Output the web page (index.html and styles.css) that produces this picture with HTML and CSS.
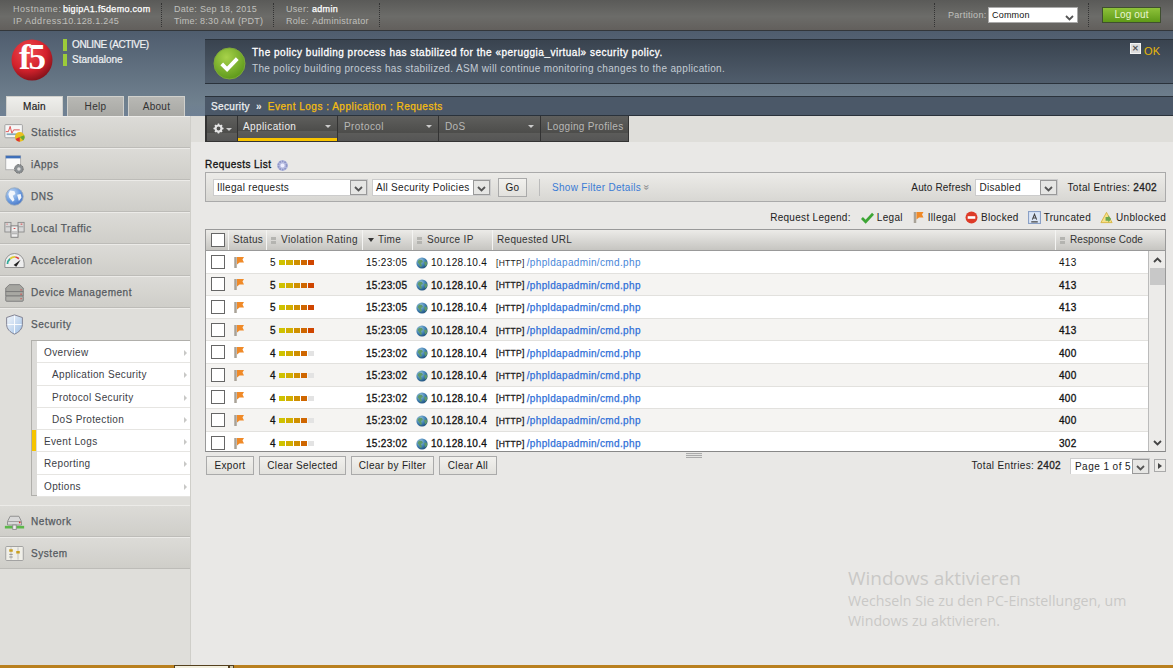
FILE: index.html
```html
<!DOCTYPE html>
<html lang="en">
<head>
<meta charset="utf-8">
<title>BIG-IP Requests</title>
<link rel="stylesheet" href="styles.css">
</head>
<body>
<svg class="defs" width="0" height="0" aria-hidden="true">
  <defs>
    <radialGradient id="gGlobe" cx="35%" cy="30%" r="75%"><stop offset="0" stop-color="#9fc8e8"/><stop offset=".6" stop-color="#3f7fb0"/><stop offset="1" stop-color="#1f4f78"/></radialGradient>
    <radialGradient id="gGlobeBig" cx="35%" cy="30%" r="75%"><stop offset="0" stop-color="#c6dcf5"/><stop offset=".6" stop-color="#6f9ee0"/><stop offset="1" stop-color="#4a78c8"/></radialGradient>
    <radialGradient id="gRed" cx="40%" cy="30%" r="75%"><stop offset="0" stop-color="#f04a50"/><stop offset=".6" stop-color="#d3222c"/><stop offset="1" stop-color="#7d1018"/></radialGradient>
    <radialGradient id="gGreen" cx="40%" cy="30%" r="70%"><stop offset="0" stop-color="#a8d24a"/><stop offset="1" stop-color="#5f9a1c"/></radialGradient>
    <linearGradient id="gShield" x1="0" y1="0" x2="1" y2="1"><stop offset="0" stop-color="#f4f7fb"/><stop offset="1" stop-color="#9fc0e6"/></linearGradient>
    <symbol id="flag" viewBox="0 0 12 13"><path d="M2.500 1v11" stroke="#a8a297" stroke-width="2.500"/><path d="M4 1h7l-1.500 2.500L11 6.500H6.500L4 8.500z" fill="#f08a28"/></symbol>
    <symbol id="globe" viewBox="0 0 12 12"><circle cx="6" cy="6" r="5.600" fill="url(#gGlobe)"/><path d="M3 2.500l3 .5 1 2-2 1 1 3-1.500 1L3 7 1.500 5zM8 5l2.500-.5.800 2.500-2 2.500z" fill="#5f9a6a"/></symbol>
    <symbol id="chev" viewBox="0 0 9 6"><path d="M1 1l3.500 3.500L8 1" fill="none" stroke="#555" stroke-width="1.800"/></symbol>
  </defs>
</svg>
<div class="page">
  <header class="topbar">
    <div class="info info-host">
      <div class="line"><span class="lab lab-host">Hostname:</span><b>bigipA1.f5demo.com</b></div>
      <div class="line"><span class="lab lab-host">IP Address:</span><span class="lab">10.128.1.245</span></div>
    </div>
    <div class="info info-date">
      <div class="line"><span class="lab lab-short">Date:</span><span class="lab">Sep 18, 2015</span></div>
      <div class="line"><span class="lab lab-short">Time:</span><span class="lab">8:30 AM (PDT)</span></div>
    </div>
    <div class="info info-user">
      <div class="line"><span class="lab lab-short">User:</span><b>admin</b></div>
      <div class="line"><span class="lab lab-short">Role:</span><span class="lab">Administrator</span></div>
    </div>
    <div class="info-fill"></div>
    <div class="info info-part">
      <span class="lab lab-part">Partition:</span>
      <span class="part-select">Common<svg class="part-chev"><use href="#chev"/></svg></span>
    </div>
    <div class="info info-logout"><span class="logout">Log out</span></div>
  </header>

  <section class="header">
    <div class="head-left">
      <div class="brand">
        <svg class="logo" viewBox="0 0 44 44">
          <circle cx="22" cy="22" r="20.500" fill="url(#gRed)"/>
          <text x="21.500" y="31" class="logo-text">f5</text>
        </svg>
        <div class="status">
          <div class="status-line status-online">ONLINE (ACTIVE)</div>
          <div class="status-line">Standalone</div>
        </div>
      </div>
      <div class="tabs">
        <span class="tab tab-on">Main</span>
        <span class="tab">Help</span>
        <span class="tab">About</span>
      </div>
    </div>
    <div class="head-right">
      <div class="banner">
        <svg class="banner-icon" viewBox="0 0 34 34">
          <circle cx="17" cy="17" r="16" fill="url(#gGreen)" stroke="#7fa83a"/>
          <path d="M9 17.500l5.500 5.500L25 12" fill="none" stroke="#fff" stroke-width="4"/>
        </svg>
        <div class="banner-text">
          <div class="banner-title">The policy building process has stabilized for the «peruggia_virtual» security policy.</div>
          <div class="banner-sub">The policy building process has stabilized. ASM will continue monitoring changes to the application.</div>
        </div>
        <div class="banner-ok"><span class="xbox">✕</span><span class="ok">OK</span></div>
      </div>
      <div class="crumb"><b>Security</b><span class="crumb-sep">»</span><b class="crumb-path">Event Logs : Application : Requests</b></div>
    </div>
  </section>

  <div class="main">
    <nav class="sidebar">
      <div class="nav-item">
        <svg class="nav-icon" viewBox="0 0 24 24"><rect x="1" y="3" width="20" height="15" rx="1" fill="#f6f6f6" stroke="#999"/><path d="M2 11h3l2-6 2 8 2-4h7" fill="none" stroke="#d44" stroke-width="1"/><path d="M3 14h12" stroke="#8ab" stroke-width="2"/><circle cx="18" cy="17" r="5.500" fill="#e8c020"/><path d="M18 17v5.500a5.500 5.500 0 0 1-5-3z" fill="#d33"/><path d="M18 17l5-2a5.500 5.500 0 0 1-1 6z" fill="#6a3"/></svg>
        <span>Statistics</span>
      </div>
      <div class="nav-item">
        <svg class="nav-icon" viewBox="0 0 24 24"><rect x="2" y="2" width="17" height="16" fill="#fafafa" stroke="#aaa"/><rect x="2" y="2" width="17" height="3" fill="#3f6fb8"/><circle cx="17" cy="17" r="5" fill="#8a8f92" stroke="#666" stroke-dasharray="2 1"/><circle cx="17" cy="17" r="2" fill="#ddd"/></svg>
        <span>iApps</span>
      </div>
      <div class="nav-item">
        <svg class="nav-icon" viewBox="0 0 24 24"><circle cx="12" cy="12" r="10" fill="url(#gGlobeBig)" stroke="#9ab"/><path d="M7 5l5 1 1 3-3 2 2 5-2 2-4-5-1-4zM15 10l4-1 1 4-3 4z" fill="#f2f6fc"/></svg>
        <span>DNS</span>
      </div>
      <div class="nav-item">
        <svg class="nav-icon" viewBox="0 0 24 24"><rect x="1" y="5" width="7" height="11" fill="#d8d8d8" stroke="#888"/><rect x="16" y="5" width="7" height="11" fill="#d8d8d8" stroke="#888"/><rect x="8" y="9" width="8" height="13" fill="#eee" stroke="#777"/><path d="M3 7h1M19 7h2M11 12h2" stroke="#d33"/><path d="M2 10h5M17 10h5M9 16h6M9 18h6" stroke="#999"/></svg>
        <span>Local Traffic</span>
      </div>
      <div class="nav-item">
        <svg class="nav-icon" viewBox="0 0 24 24"><path d="M1 20v-5a11 11 0 0 1 22 0v5z" fill="#eee" stroke="#888"/><path d="M4 16a8 8 0 0 1 3-6" fill="none" stroke="#3a9" stroke-width="2"/><path d="M7 10a8 8 0 0 1 6-2" fill="none" stroke="#dc3" stroke-width="2"/><path d="M13 8a8 8 0 0 1 4 2" fill="none" stroke="#d44" stroke-width="2"/><path d="M11 17l8-6-5 8z" fill="#222"/></svg>
        <span>Acceleration</span>
      </div>
      <div class="nav-item">
        <svg class="nav-icon" viewBox="0 0 24 24"><path d="M2 7l4-4h12l4 4v4H2z" fill="#a5a5a0" stroke="#777"/><rect x="2" y="11" width="20" height="5" fill="#a8a8a3" stroke="#777"/><rect x="2" y="16" width="20" height="6" rx="1" fill="#b0b0ab" stroke="#777"/><path d="M19 9h1M19 14h1M19 19h1" stroke="#d33" stroke-width="1.500"/></svg>
        <span>Device Management</span>
      </div>
      <div class="nav-item nav-open">
        <svg class="nav-icon" viewBox="0 0 24 24"><path d="M12 1l9 3v8c0 5-4 9-9 11-5-2-9-6-9-11V4z" fill="url(#gShield)" stroke="#778"/><path d="M12 2v20M4 12h16" stroke="#fff"/></svg>
        <span>Security</span>
      </div>
      <ul class="submenu">
        <li class="sub">Overview</li>
        <li class="sub sub-in">Application Security</li>
        <li class="sub sub-in">Protocol Security</li>
        <li class="sub sub-in">DoS Protection</li>
        <li class="sub sub-on">Event Logs</li>
        <li class="sub">Reporting</li>
        <li class="sub">Options</li>
      </ul>
      <div class="nav-item nav-after">
        <svg class="nav-icon" viewBox="0 0 24 24"><path d="M4 12l3-6h10l3 6v4H4z" fill="#d8d8d8" stroke="#888"/><path d="M4 12h16" stroke="#999"/><circle cx="18" cy="13" r="1" fill="#d33"/><rect x="1" y="17" width="22" height="3" fill="#5cb84a"/><rect x="10" y="16" width="4" height="5" fill="#eee" stroke="#888"/></svg>
        <span>Network</span>
      </div>
      <div class="nav-item">
        <svg class="nav-icon" viewBox="0 0 24 24"><rect x="2" y="4" width="20" height="16" rx="1" fill="#f0efe8" stroke="#999"/><path d="M8 5v14M16 5v14" stroke="#bbb"/><path d="M6 7h4v3H6zM14 9h4v3h-4z" fill="#c9a020"/><path d="M6 13h4M6 16h4" stroke="#888"/></svg>
        <span>System</span>
      </div>
    </nav>

    <main class="content">
      <div class="subnav-strip">
        <div class="subnav">
          <span class="snav snav-gear"><svg class="gear" viewBox="0 0 12 12"><circle cx="6" cy="6" r="3.300" fill="none" stroke="#e4e4e4" stroke-width="2.400"/><path d="M6 .5v2M6 9.500v2M.5 6h2M9.500 6h2M2.100 2.100l1.400 1.400M8.500 8.500l1.400 1.400M2.100 9.900l1.400-1.400M8.500 3.500l1.400-1.400" stroke="#e4e4e4" stroke-width="1.600"/></svg><i class="caret"></i></span>
          <span class="snav snav-app snav-on">Application<i class="caret"></i></span>
          <span class="snav snav-pro">Protocol<i class="caret"></i></span>
          <span class="snav snav-dos">DoS<i class="caret"></i></span>
          <span class="snav snav-log">Logging Profiles</span>
        </div>
      </div>

      <div class="panel">
        <h2 class="title">Requests List
          <svg class="title-gear" viewBox="0 0 12 12"><circle cx="6" cy="6" r="5" fill="#b9bee2"/><circle cx="6" cy="6" r="3.800" fill="none" stroke="#8f96c6" stroke-width="1.600" stroke-dasharray="1.600 .8"/><circle cx="6" cy="6" r="1.800" fill="#eef"/></svg>
        </h2>

        <div class="filter">
          <span class="sel sel-req">Illegal requests<span class="sel-btn"><svg class="chev"><use href="#chev"/></svg></span></span>
          <span class="sel sel-pol">All Security Policies<span class="sel-btn"><svg class="chev"><use href="#chev"/></svg></span></span>
          <span class="btn btn-go">Go</span>
          <span class="divider"></span>
          <span class="show">Show Filter Details <i class="dbl">»</i></span>
          <span class="grow"></span>
          <span class="auto">Auto Refresh</span>
          <span class="sel sel-auto">Disabled<span class="sel-btn"><svg class="chev"><use href="#chev"/></svg></span></span>
          <span class="total">Total Entries: <em class="strong">2402</em></span>
        </div>

        <div class="legend">
          <span class="leg-title">Request Legend:</span>
          <span class="leg"><svg class="leg-i" viewBox="0 0 14 12"><path d="M1 6.500l4 4L13 2" fill="none" stroke="#3da535" stroke-width="3"/></svg>Legal</span>
          <span class="leg"><svg class="leg-i"><use href="#flag"/></svg>Illegal</span>
          <span class="leg"><svg class="leg-i" viewBox="0 0 12 12"><circle cx="6" cy="6" r="5.500" fill="#dd3b28"/><rect x="2.500" y="4.800" width="7" height="2.400" fill="#fff"/></svg>Blocked</span>
          <span class="leg"><svg class="leg-i" viewBox="0 0 12 12"><rect x=".5" y=".5" width="11" height="11" fill="#dbe6f6" stroke="#8aa0c6"/><path d="M4 8l2-5 2 5M4.800 6.500h2.400M3 10h6" fill="none" stroke="#444"/></svg>Truncated</span>
          <span class="leg"><svg class="leg-i" viewBox="0 0 14 13"><path d="M7 1l6 11H1z" fill="#f6e08a" stroke="#d8b640"/><path d="M6 6h3V4l3 4-3 4v-2H6z" fill="#6aa84f"/></svg>Unblocked</span>
        </div>

        <div class="table">
          <div class="thead">
            <span class="th th-check"><i class="check"></i></span>
            <span class="th">Status</span>
            <span class="th th-viol"><i class="sort"></i>Violation Rating</span>
            <span class="th"><i class="sort-down"></i>Time</span>
            <span class="th"><i class="sort"></i>Source IP</span>
            <span class="th">Requested URL</span>
            <span class="th th-resp"><i class="sort"></i>Response Code</span>
          </div>
          <div class="tbody">
            <div class="rows">
              <div class="row row-first">
                <span class="td td-check"><i class="check"></i></span><span class="td"><svg class="flag"><use href="#flag"/></svg></span>
                <span class="td"><span class="num">5</span><span class="bars"><i class="b1"></i><i class="b2"></i><i class="b3"></i><i class="b4"></i><i class="b5"></i></span></span>
                <span class="td">15:23:05</span><span class="td"><svg class="globe"><use href="#globe"/></svg>10.128.10.4</span>
                <span class="td"><span class="http">[HTTP]</span><a class="url">/phpldapadmin/cmd.php</a></span><span class="td td-code">413</span>
              </div>
              <div class="row row-alt">
                <span class="td td-check"><i class="check"></i></span><span class="td"><svg class="flag"><use href="#flag"/></svg></span>
                <span class="td"><span class="num">5</span><span class="bars"><i class="b1"></i><i class="b2"></i><i class="b3"></i><i class="b4"></i><i class="b5"></i></span></span>
                <span class="td">15:23:05</span><span class="td"><svg class="globe"><use href="#globe"/></svg>10.128.10.4</span>
                <span class="td"><span class="http">[HTTP]</span><a class="url">/phpldapadmin/cmd.php</a></span><span class="td td-code">413</span>
              </div>
              <div class="row">
                <span class="td td-check"><i class="check"></i></span><span class="td"><svg class="flag"><use href="#flag"/></svg></span>
                <span class="td"><span class="num">5</span><span class="bars"><i class="b1"></i><i class="b2"></i><i class="b3"></i><i class="b4"></i><i class="b5"></i></span></span>
                <span class="td">15:23:05</span><span class="td"><svg class="globe"><use href="#globe"/></svg>10.128.10.4</span>
                <span class="td"><span class="http">[HTTP]</span><a class="url">/phpldapadmin/cmd.php</a></span><span class="td td-code">413</span>
              </div>
              <div class="row row-alt">
                <span class="td td-check"><i class="check"></i></span><span class="td"><svg class="flag"><use href="#flag"/></svg></span>
                <span class="td"><span class="num">5</span><span class="bars"><i class="b1"></i><i class="b2"></i><i class="b3"></i><i class="b4"></i><i class="b5"></i></span></span>
                <span class="td">15:23:05</span><span class="td"><svg class="globe"><use href="#globe"/></svg>10.128.10.4</span>
                <span class="td"><span class="http">[HTTP]</span><a class="url">/phpldapadmin/cmd.php</a></span><span class="td td-code">413</span>
              </div>
              <div class="row">
                <span class="td td-check"><i class="check"></i></span><span class="td"><svg class="flag"><use href="#flag"/></svg></span>
                <span class="td"><span class="num">4</span><span class="bars"><i class="b1"></i><i class="b2"></i><i class="b3"></i><i class="b4"></i><i class="b0"></i></span></span>
                <span class="td">15:23:02</span><span class="td"><svg class="globe"><use href="#globe"/></svg>10.128.10.4</span>
                <span class="td"><span class="http">[HTTP]</span><a class="url">/phpldapadmin/cmd.php</a></span><span class="td td-code">400</span>
              </div>
              <div class="row row-alt">
                <span class="td td-check"><i class="check"></i></span><span class="td"><svg class="flag"><use href="#flag"/></svg></span>
                <span class="td"><span class="num">4</span><span class="bars"><i class="b1"></i><i class="b2"></i><i class="b3"></i><i class="b4"></i><i class="b0"></i></span></span>
                <span class="td">15:23:02</span><span class="td"><svg class="globe"><use href="#globe"/></svg>10.128.10.4</span>
                <span class="td"><span class="http">[HTTP]</span><a class="url">/phpldapadmin/cmd.php</a></span><span class="td td-code">400</span>
              </div>
              <div class="row">
                <span class="td td-check"><i class="check"></i></span><span class="td"><svg class="flag"><use href="#flag"/></svg></span>
                <span class="td"><span class="num">4</span><span class="bars"><i class="b1"></i><i class="b2"></i><i class="b3"></i><i class="b4"></i><i class="b0"></i></span></span>
                <span class="td">15:23:02</span><span class="td"><svg class="globe"><use href="#globe"/></svg>10.128.10.4</span>
                <span class="td"><span class="http">[HTTP]</span><a class="url">/phpldapadmin/cmd.php</a></span><span class="td td-code">400</span>
              </div>
              <div class="row row-alt">
                <span class="td td-check"><i class="check"></i></span><span class="td"><svg class="flag"><use href="#flag"/></svg></span>
                <span class="td"><span class="num">4</span><span class="bars"><i class="b1"></i><i class="b2"></i><i class="b3"></i><i class="b4"></i><i class="b0"></i></span></span>
                <span class="td">15:23:02</span><span class="td"><svg class="globe"><use href="#globe"/></svg>10.128.10.4</span>
                <span class="td"><span class="http">[HTTP]</span><a class="url">/phpldapadmin/cmd.php</a></span><span class="td td-code">400</span>
              </div>
              <div class="row">
                <span class="td td-check"><i class="check"></i></span><span class="td"><svg class="flag"><use href="#flag"/></svg></span>
                <span class="td"><span class="num">4</span><span class="bars"><i class="b1"></i><i class="b2"></i><i class="b3"></i><i class="b4"></i><i class="b0"></i></span></span>
                <span class="td">15:23:02</span><span class="td"><svg class="globe"><use href="#globe"/></svg>10.128.10.4</span>
                <span class="td"><span class="http">[HTTP]</span><a class="url">/phpldapadmin/cmd.php</a></span><span class="td td-code">302</span>
              </div>
            </div>
            <div class="scroll">
              <svg class="scroll-arrow" viewBox="0 0 9 6"><path d="M1 5l3.500-3.500L8 5" fill="none" stroke="#444" stroke-width="1.800"/></svg>
              <span class="thumb"></span>
              <span class="grow"></span>
              <svg class="scroll-arrow" viewBox="0 0 9 6"><path d="M1 1l3.500 3.500L8 1" fill="none" stroke="#444" stroke-width="1.800"/></svg>
            </div>
          </div>
        </div>

        <div class="foot">
          <span class="btn btn-export">Export</span>
          <span class="btn btn-sel">Clear Selected</span>
          <span class="btn btn-filter">Clear by Filter</span>
          <span class="btn btn-all">Clear All</span>
          <span class="grip"></span>
          <span class="grow"></span>
          <span class="total">Total Entries: <em class="strong">2402</em></span>
          <span class="sel sel-page">Page 1 of 5<span class="sel-btn"><svg class="chev"><use href="#chev"/></svg></span></span>
          <span class="next"><i></i></span>
        </div>
      </div>

      <aside class="watermark">
        <div class="wm-title">Windows aktivieren</div>
        <div class="wm-text">Wechseln Sie zu den PC-Einstellungen, um<br>Windows zu aktivieren.</div>
      </aside>
    </main>
  </div>
  <footer class="taskbar"><span class="task-win"></span><span class="task-end"></span></footer>
</div>
</body>
</html>
```

FILE: styles.css
```css
* { box-sizing: border-box; }
html, body { margin: 0; padding: 0; }
body {
  width: 1173px;
  height: 668px;
  overflow: hidden;
  font-family: "Liberation Sans", Arial, sans-serif;
  font-size: 10px;
  color: #222;
  background: #e9e8e6;
}
.defs { display: block; height: 0; }
.page { display: flex; flex-direction: column; height: 668px; }
i, em { font-style: normal; }
b { font-weight: 400; -webkit-text-stroke: .25px currentColor; }

/* top bar */
.topbar {
  height: 31px;
  flex: none;
  display: flex;
  align-items: flex-start;
  padding: 3px 0 0 13px;
  background: linear-gradient(#5a5a58, #6c6c69 55%, #625f5c);
  border-bottom: 1px solid #33373b;
  font-size: 9px;
  letter-spacing: .3px;
  color: #fff;
}
.info { display: flex; flex-direction: column; height: 24px; line-height: 12px; white-space: nowrap; border-right: 1px dotted #333; flex: none; }
.line { display: flex; }
.lab { color: #c0c0bd; flex: none; }
.lab-host { width: 50px; letter-spacing: .55px; }
.lab-short { width: 26px; }
.lab-part { width: 40px; }
.info-host { width: 149px; }
.info-date { width: 112px; padding-left: 12px; }
.info-user { width: 106px; padding-left: 12px; }
.info-fill { flex: 1; }
.info-part { flex-direction: row; align-items: center; width: 155px; padding-left: 13px; border-left: 1px dotted #333; }
.part-select {
  width: 90px;
  height: 16px;
  background: #fff;
  border: 1px solid #aaa;
  color: #111;
  line-height: 14px;
  padding-left: 3px;
  position: relative;
  letter-spacing: .2px;
  flex: none;
}
.part-chev { position: absolute; right: 3px; top: 7px; width: 9px; height: 6px; }
.info-logout { border-right: none; padding: 4px 12px 0 13px; }
.logout {
  display: block;
  width: 59px;
  height: 16px;
  background: linear-gradient(#8ec23a, #5f9a18);
  border: 1px solid #3f4f30;
  color: #eaf6d0;
  text-align: center;
  font-size: 10px;
  letter-spacing: .1px;
  line-height: 14px;
}

/* header */
.header {
  height: 85px;
  flex: none;
  display: flex;
  background: linear-gradient(#4f5d6e, #70818f 85%, #6f8094);
}
.head-left { width: 205px; flex: none; display: flex; flex-direction: column; justify-content: space-between; }
.brand { display: flex; padding: 7px 0 0 10px; }
.logo { width: 44px; height: 44px; flex: none; }
.logo-text { font-family: "Liberation Serif", serif; font-size: 35px; font-weight: 700; fill: #fff; text-anchor: middle; letter-spacing: -2px; }
.status { margin-left: 9px; padding-top: 1px; display: flex; flex-direction: column; gap: 3px; }
.status-line {
  border-left: 4px solid #9ccb3a;
  height: 12px;
  line-height: 12px;
  padding-left: 5px;
  color: #f0f2f4;
  -webkit-text-stroke: .2px currentColor;
  white-space: nowrap;
}
.status-online { letter-spacing: -.4px; }
.tabs { display: flex; gap: 4px; padding-left: 6px; }
.tab {
  width: 57px;
  height: 20px;
  background: linear-gradient(#b8b8b4, #a8a8a4);
  border: 1px solid #d0d0cc;
  border-bottom: none;
  text-align: center;
  line-height: 19px;
  color: #333;
  letter-spacing: .3px;
}
.tab-on { background: linear-gradient(#efefec, #dfdeda); color: #222; -webkit-text-stroke: .2px currentColor; }
.head-right { flex: 1; display: flex; flex-direction: column; justify-content: space-between; padding-top: 8px; min-width: 0; }
.banner {
  height: 45px;
  display: flex;
  align-items: flex-start;
  background: linear-gradient(#39434f, #505d6c);
  border-top: 1px solid #2a323b;
  border-bottom: 1px solid #2a323b;
}
.banner-icon { width: 33px; height: 33px; flex: none; margin: 7px 0 0 8px; }
.banner-text { flex: 1; padding: 6px 0 0 6px; min-width: 0; }
.banner-title { color: #fff; line-height: 13px; letter-spacing: .5px; -webkit-text-stroke: .3px #fff; }
.banner-sub { color: #c4ccd4; line-height: 13px; margin-top: 3px; letter-spacing: .34px; }
.banner-ok { display: flex; align-items: center; gap: 3px; padding-top: 5px; margin-right: 13px; flex: none; }
.xbox { width: 11px; height: 11px; background: #dcdcdc; border: 1px solid #f4f4f4; color: #555; font-size: 8px; line-height: 9px; text-align: center; font-weight: 700; margin-top: -6px; }
.ok { color: #e8b708; font-size: 11px; }
.crumb {
  height: 20px;
  background: #4b5868;
  border-top: 1px solid #2a323b;
  border-bottom: 1px solid #2a323b;
  padding-left: 6px;
  line-height: 19px;
  color: #eef0f2;
  letter-spacing: .35px;
  white-space: nowrap;
}
.crumb-sep { margin: 0 6px; font-weight: 700; }
.crumb-path { color: #f4bd10; letter-spacing: .5px; }

/* main */
.main { flex: 1; display: flex; min-height: 0; position: relative; }
.sidebar {
  width: 191px;
  flex: none;
  background: #dfdeda;
  border-right: 1px solid #cfcec9;
  display: flex;
  flex-direction: column;
}
.nav-item {
  height: 32px;
  flex: none;
  display: flex;
  align-items: center;
  padding-left: 4px;
  gap: 6px;
  background: linear-gradient(#dcdbd7, #cfcec9);
  border-top: 1px solid #ecebe8;
  border-bottom: 1px solid #bdbcb8;
  color: #555a60;
  letter-spacing: .55px;
  -webkit-text-stroke: .25px currentColor;
}
.nav-open { background: #dfdeda; border-bottom: none; }
.nav-after { margin-top: 9px; }
.nav-icon { width: 21px; height: 21px; flex: none; }
.submenu { list-style: none; margin: 0 0 0 31px; padding: 0 0 0 5px; height: 156px; border: 1px solid #b0afab; border-right: none; background: #dcdbd8; }
.sub {
  height: 22.300px;
  background: #fff;
  border-bottom: 1px solid #e6e5e2;
  line-height: 23px;
  padding-left: 7px;
  color: #3c4046;
  letter-spacing: .35px;
  position: relative;
}
.sub::after { content: ""; position: absolute; right: 3px; top: 9px; border-left: 3px solid #c8c8c6; border-top: 3px solid transparent; border-bottom: 3px solid transparent; }
.sub-in { padding-left: 15px; }
.sub-on::before { content: ""; position: absolute; left: -5px; top: 0; bottom: 0; width: 4px; background: #f5c400; }

/* content */
.content { flex: 1; min-width: 0; position: relative; display: flex; flex-direction: column; }
.subnav-strip { height: 26px; flex: none; background: #dfdeda; padding-left: 14px; }
.subnav { display: flex; width: 424px; height: 26px; background: #333; padding: 0 1px 1px; gap: 1px; border-left: 1px solid #333; }
.snav {
  position: relative;
  height: 25px;
  background: linear-gradient(#5f5f5d, #4c4c4a 70%, #5c5c5a 70%, #555);
  color: #b8b8b6;
  line-height: 22px;
  padding-left: 6px;
  letter-spacing: .4px;
}
.snav-log { letter-spacing: .3px; }
.snav-gear { width: 30px; display: flex; align-items: center; padding-left: 6px; gap: 3px; }
.snav-app { width: 99px; padding-left: 5px; }
.snav-pro { width: 100px; }
.snav-dos { width: 101px; }
.snav-log { width: 87px; }
.snav-on { color: #eee; border-bottom: 3px solid #f9c400; }
.gear { width: 11px; height: 11px; }
.caret { position: absolute; right: 6px; top: 9px; border-top: 3px solid #ccc; border-left: 3px solid transparent; border-right: 3px solid transparent; }
.snav-gear .caret { right: 5px; top: 12px; }

.panel { flex: 1; padding: 16px 7px 0 14px; display: flex; flex-direction: column; min-height: 0; }
.title { margin: 0; font-size: 10px; line-height: 12px; height: 14px; font-weight: 400; letter-spacing: .45px; color: #111; display: flex; align-items: center; gap: 5px; -webkit-text-stroke: .3px currentColor; }
.title-gear { width: 13px; height: 13px; }
.filter {
  height: 30px;
  width: 961px;
  display: flex;
  align-items: center;
  padding: 0 8px 0 7px;
  background: linear-gradient(#ecebe8, #d8d7d3);
  border: 1px solid #aaa;
  letter-spacing: .3px;
  color: #222;
}
.sel {
  position: relative;
  height: 17px;
  display: block;
  background: #fff;
  border: 1px solid #ccc;
  line-height: 15px;
  padding-left: 3px;
  flex: none;
  white-space: nowrap;
}
.sel-btn { position: absolute; right: 0; top: 0; width: 17px; height: 15px; background: #e6e6e4; border: 1px solid #999; }
.chev { position: absolute; left: 3px; top: 5px; width: 9px; height: 6px; }
.sel-req { width: 155px; }
.sel-pol { width: 119px; margin-left: 4px; }
.sel-auto { width: 83px; margin-left: 3px; padding-left: 4px; }
.sel-page { width: 80px; padding-left: 4px; height: 16px; border-bottom: none; letter-spacing: .45px; }
.btn {
  display: block;
  height: 19px;
  line-height: 17px;
  text-align: center;
  background: linear-gradient(#f2f1ee, #e2e1dd);
  border: 1px solid #aaa;
  color: #222;
  letter-spacing: .35px;
  flex: none;
}
.btn-go { margin-left: 7px; width: 29px; }
.btn-export { width: 48px; }
.btn-sel { width: 87px; }
.btn-filter { width: 83px; }
.btn-all { width: 58px; }
.divider { width: 1px; height: 17px; background: #bbb; margin: 0 12px 0 12px; }
.show { color: #3a7bd5; }
.dbl { color: #888; display: inline-block; transform: rotate(90deg); }
.grow { flex: 1; }
.auto { color: #222; letter-spacing: .15px; }
.total { letter-spacing: .35px; color: #222; margin-left: 10px; }
.strong { -webkit-text-stroke: .3px currentColor; }
.legend { height: 27px; width: 961px; display: flex; align-items: center; justify-content: flex-end; gap: 9px; letter-spacing: .3px; color: #222; padding-top: 4px; }
.leg-title { margin-right: 1px; }
.leg { display: flex; align-items: center; gap: 3px; }
.leg-i { width: 13px; height: 13px; flex: none; }

/* table */
.table { width: 961px; border: 1px solid #999; border-bottom: 1px solid #888; height: 223px; flex: none; background: #fff; }
.thead {
  height: 21px;
  display: grid;
  grid-template-columns: 23px 38px 96px 50px 80px 563px 1fr;
  background: linear-gradient(#ecebe8, #c6c5c1);
  border-bottom: 1px solid #999;
  letter-spacing: .3px;
  color: #333;
}
.th { display: flex; align-items: center; border-right: 1px solid #f4f4f2; padding-left: 4px; line-height: 20px; white-space: nowrap; }
.th:last-child { border-right: none; }
.th-check { padding-left: 5px; }
.th-viol { letter-spacing: .45px; }
.th-resp { letter-spacing: .1px; }
.check { display: block; width: 14px; height: 14px; background: #fff; border: 1px solid #666; }
.sort { display: block; width: 5px; height: 7px; margin: 0 5px 0 0; background: linear-gradient(#b4b4b0 40%, transparent 40% 60%, #b4b4b0 60%); }
.sort-down { display: block; width: 0; margin: 0 4px 0 1px; border-top: 4px solid #333; border-left: 3px solid transparent; border-right: 3px solid transparent; }
.tbody { display: flex; height: 200px; }
.rows { flex: 1; min-width: 0; overflow: hidden; }
.row {
  height: 22.600px;
  padding-top: 2px;
  display: grid;
  grid-template-columns: 23px 38px 96px 50px 80px 563px 1fr;
  border-bottom: 1px solid #e2e1de;
  background: #fff;
  letter-spacing: .3px;
  color: #111;
  -webkit-text-stroke: .3px currentColor;
}
.row-first { -webkit-text-stroke: 0; }
.row-first .num, .row-first .td { -webkit-text-stroke: 0; }
.row-alt { background: #f5f4f2; }
.td { display: flex; align-items: center; padding-left: 3px; white-space: nowrap; }
.td-check { padding-left: 5px; margin-top: -2px; }
.flag { width: 12px; height: 13px; margin-left: 1px; margin-top: -1px; }
.num { width: 9px; }
.bars { display: flex; gap: 1px; }
.bars i { display: block; width: 6.300px; height: 5px; }
.b1 { background: #cfc200; }
.b2 { background: #d2ae00; }
.b3 { background: #cf8f00; }
.b4 { background: #cf6600; }
.b5 { background: #cf4500; }
.b0 { background: #e3e3e3; }
.globe { width: 12px; height: 12px; margin-right: 3px; flex: none; }
.http { font-size: 8.500px; margin-right: 2px; color: #222; }
.url { color: #2f6fd8; letter-spacing: .35px; -webkit-text-stroke: .25px currentColor; }
.row-first .url { color: #4a86d8; -webkit-text-stroke: 0; }
.scroll { width: 17px; flex: none; background: #ecebe9; border-left: 1px solid #bbb; display: flex; flex-direction: column; align-items: center; }
.scroll-arrow { width: 9px; height: 6px; margin: 6px 0 5px; flex: none; }
.thumb { width: 15px; height: 17px; background: #c8c8c8; flex: none; }

.foot { display: flex; align-items: center; width: 961px; height: 19px; margin-top: 4px; position: relative; gap: 5px; padding-left: 1px; }
.foot .total { margin: 0; }
.foot .sel-page { margin-left: 4px; }
.grip { position: absolute; left: 481px; top: -3px; width: 16px; height: 5px; background: repeating-linear-gradient(#aaa 0 1px, #e4e4e2 1px 2px); }
.next { width: 12px; height: 13px; background: #ecebe8; border: 1px solid #aaa; margin-left: -1px; display: flex; align-items: center; justify-content: center; }
.next i { border-left: 4px solid #444; border-top: 3px solid transparent; border-bottom: 3px solid transparent; }

/* overlay watermark */
.watermark { position: absolute; left: 657px; top: 449px; font-family: "Open Sans", sans-serif; color: #c9c8c6; }
.wm-title { font-size: 19px; line-height: 26px; }
.wm-text { font-size: 14.200px; line-height: 20px; }

/* bottom strip */
.taskbar { height: 3px; flex: none; background: #b9801f; display: flex; padding-left: 174px; }
.task-win { width: 55px; background: #f2efdf; border: 1px solid #54401e; border-bottom: none; }
.task-end { width: 5px; background: #d0c8a8; border: 1px solid #54401e; border-bottom: none; }
```
